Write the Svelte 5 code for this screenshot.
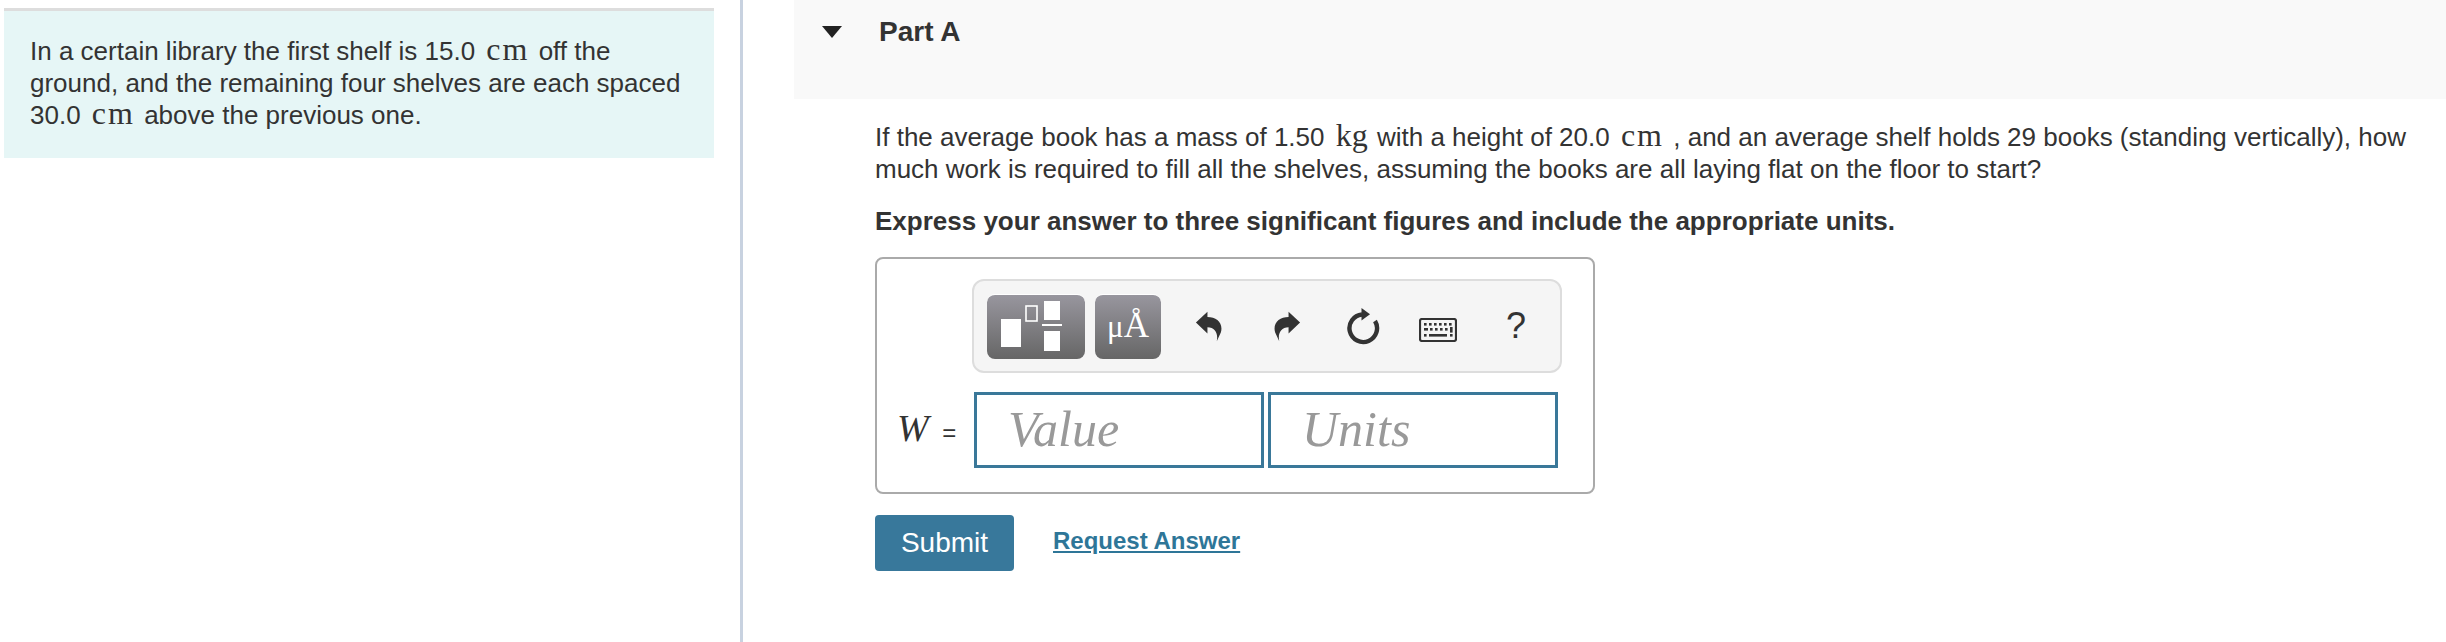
<script>
	const keyRows = [
		{ y: 5, xs: [5, 10, 15, 20, 25, 30] },
		{ y: 10, xs: [11, 16, 21, 26] },
		{ y: 16, xs: [5, 31] }
	];
</script>

<div class="page">
	<aside class="intro">
		<div class="intro-box">
			<p>
				In a certain library the first shelf is 15.0 <span class="math cm">cm</span> off the ground, and the
				remaining four shelves are each spaced 30.0 <span class="math cm">cm</span> above the previous one.
			</p>
		</div>
	</aside>

	<main class="part">
		<header class="part-head">
			<span class="caret"></span>
			<h2>Part A</h2>
		</header>

		<section class="part-body">
			<p class="question">
				If the average book has a mass of 1.50 <span class="math">kg</span> with a height of 20.0
				<span class="math cm">cm</span> , and an average shelf holds 29 books (standing vertically), how much work
				is required to fill all the shelves, assuming the books are all laying flat on the floor to start?
			</p>
			<p class="instruction">Express your answer to three significant figures and include the appropriate units.</p>

			<div class="answer">
				<div class="toolbar">
					<button class="tool templates" aria-label="Templates">
						<svg width="98" height="65" viewBox="0 0 98 65">
							<rect x="14" y="24" width="20" height="28" fill="#fff" />
							<rect x="39" y="11" width="11" height="15" fill="none" stroke="#fff" stroke-width="1.6" />
							<rect x="57" y="6" width="16" height="19" fill="#fff" />
							<rect x="55" y="29" width="20" height="2" fill="#fff" />
							<rect x="57" y="36" width="16" height="20" fill="#fff" />
						</svg>
					</button>
					<button class="tool units"><span class="mu">μ</span><span class="ang">Å</span></button>

					<svg class="icon undo" width="28" height="33" viewBox="0 0 90 105" aria-label="Undo">
						<path d="M3 40 L40 5 L40 22 C70 22 92 42 83 72 L70 100 C75 75 65 55 40 55 L40 75 Z" fill="#333" />
					</svg>
					<svg class="icon redo" width="28" height="33" viewBox="0 0 90 105" aria-label="Redo">
						<path
							d="M3 40 L40 5 L40 22 C70 22 92 42 83 72 L70 100 C75 75 65 55 40 55 L40 75 Z"
							fill="#333"
							transform="translate(90 0) scale(-1 1)"
						/>
					</svg>
					<svg class="icon reset" width="36" height="38" viewBox="0 0 36 38" aria-label="Reset">
						<path d="M17 7.5 A13.8 13.8 0 1 0 30 14" fill="none" stroke="#333" stroke-width="4.4" />
						<path d="M16.5 1 L25 7.2 L16.5 13.5 Z" fill="#333" />
					</svg>
					<svg class="icon keyboard" width="38" height="24" viewBox="0 0 38 24" aria-label="Keyboard">
						<rect x="1" y="1" width="36" height="22" rx="2" fill="none" stroke="#333" stroke-width="2.2" />
						{#each keyRows as row}
							{#each row.xs as x}
								<rect {x} y={row.y} width="2.6" height="2.6" fill="#333" />
							{/each}
						{/each}
						<rect x="5" y="10" width="4" height="2.6" fill="#333" />
						<rect x="10" y="16" width="18" height="2.6" fill="#333" />
						<rect x="31" y="9" width="2.6" height="5.6" fill="#333" />
					</svg>
					<span class="help">?</span>
				</div>

				<div class="entry">
					<label class="symbol" for="value"><i>W</i> <span class="eq">=</span></label>
					<input id="value" class="field" placeholder="Value" />
					<input class="field" placeholder="Units" />
				</div>
			</div>

			<div class="actions">
				<button class="submit">Submit</button>
				<a class="request" href="#answer">Request Answer</a>
			</div>
		</section>
	</main>
</div>

<style>
	:global(body) {
		background: #fff;
		overflow: hidden;
	}

	.page {
		display: flex;
		height: 642px;
		font-family: 'Liberation Sans', Arial, sans-serif;
		font-size: 26px;
		line-height: 32px;
		color: #333;
	}

	p {
		margin: 0;
	}

	.math {
		font-family: 'Liberation Serif', serif;
		font-size: 32px;
		line-height: 0;
		margin: 0 2px 0 4px;
	}

	.cm {
		letter-spacing: 2px;
	}

	.intro {
		width: 743px;
		flex: none;
		box-sizing: border-box;
		padding: 8px 26px 0 4px;
		border-right: 3px solid #c8d2e0;
	}

	.intro-box {
		background: #e6f6f6;
		border-top: 3px solid #ddd;
		padding: 24px 20px 27px 26px;
	}

	.part {
		flex: 1;
		margin-left: 51px;
		min-width: 0;
	}

	.part-head {
		display: flex;
		height: 99px;
		background: #f9f9f9;
		padding-left: 28px;
		box-sizing: border-box;
	}

	.caret {
		width: 0;
		height: 0;
		margin-top: 26px;
		border-left: 10.5px solid transparent;
		border-right: 10.5px solid transparent;
		border-top: 12px solid #222;
	}

	h2 {
		margin: 16px 0 0 37px;
		font-size: 28px;
		line-height: 32px;
		font-weight: 700;
	}

	.part-body {
		padding: 22px 0 0 81px;
	}

	.instruction {
		margin-top: 20px;
		font-weight: 700;
	}

	.answer {
		width: 720px;
		box-sizing: border-box;
		margin-top: 20px;
		padding: 20px 0 24px 20px;
		border: 2px solid #aaa;
		border-radius: 8px;
	}

	.toolbar {
		display: flex;
		align-items: center;
		box-sizing: border-box;
		width: 590px;
		height: 94px;
		margin-left: 75px;
		padding-left: 13px;
		background: #f5f5f5;
		border: 2px solid #ddd;
		border-radius: 12px;
	}

	.tool {
		height: 65px;
		padding: 0;
		border: none;
		border-top: 1px solid #fff;
		border-radius: 8px;
		background: linear-gradient(#98969e, #666);
		color: #fff;
	}

	.templates {
		width: 98px;
	}

	.templates svg {
		display: block;
	}

	.units {
		width: 66px;
		margin-left: 10px;
		font-family: 'Liberation Serif', serif;
		font-size: 35px;
		line-height: 1;
		padding-bottom: 2px;
	}

	.mu {
		font-size: 31px;
	}

	.icon {
		flex: none;
	}

	.undo {
		margin-left: 34px;
	}

	.redo {
		margin-left: 50px;
	}

	.reset {
		margin-left: 44px;
	}

	.keyboard {
		margin-left: 38px;
		margin-top: 8px;
	}

	.help {
		margin-left: 49px;
		font-size: 36px;
		color: #333;
	}

	.entry {
		display: flex;
		align-items: center;
		margin-top: 19px;
	}

	.symbol {
		width: 77px;
		flex: none;
		font-family: 'Liberation Serif', serif;
		font-size: 38px;
	}

	.eq {
		font-family: 'Liberation Sans', sans-serif;
		font-size: 24px;
		margin-left: 4px;
	}

	.field {
		width: 290px;
		height: 76px;
		box-sizing: border-box;
		margin-right: 4px;
		padding: 0 0 3px 31px;
		border: 3px solid #3a7899;
		background: #fff;
		font-family: 'Liberation Serif', serif;
		font-style: italic;
		font-size: 50px;
		outline: none;
	}

	.field::placeholder {
		color: #999;
		opacity: 1;
	}

	.actions {
		display: flex;
		align-items: center;
		margin-top: 21px;
	}

	.submit {
		width: 139px;
		height: 56px;
		padding: 0;
		border: none;
		border-radius: 4px;
		background: #38789b;
		color: #fff;
		font-family: 'Liberation Sans', sans-serif;
		font-size: 28px;
	}

	.request {
		margin-left: 39px;
		margin-top: -4px;
		font-size: 24px;
		font-weight: 700;
		color: #2e7698;
	}
</style>
